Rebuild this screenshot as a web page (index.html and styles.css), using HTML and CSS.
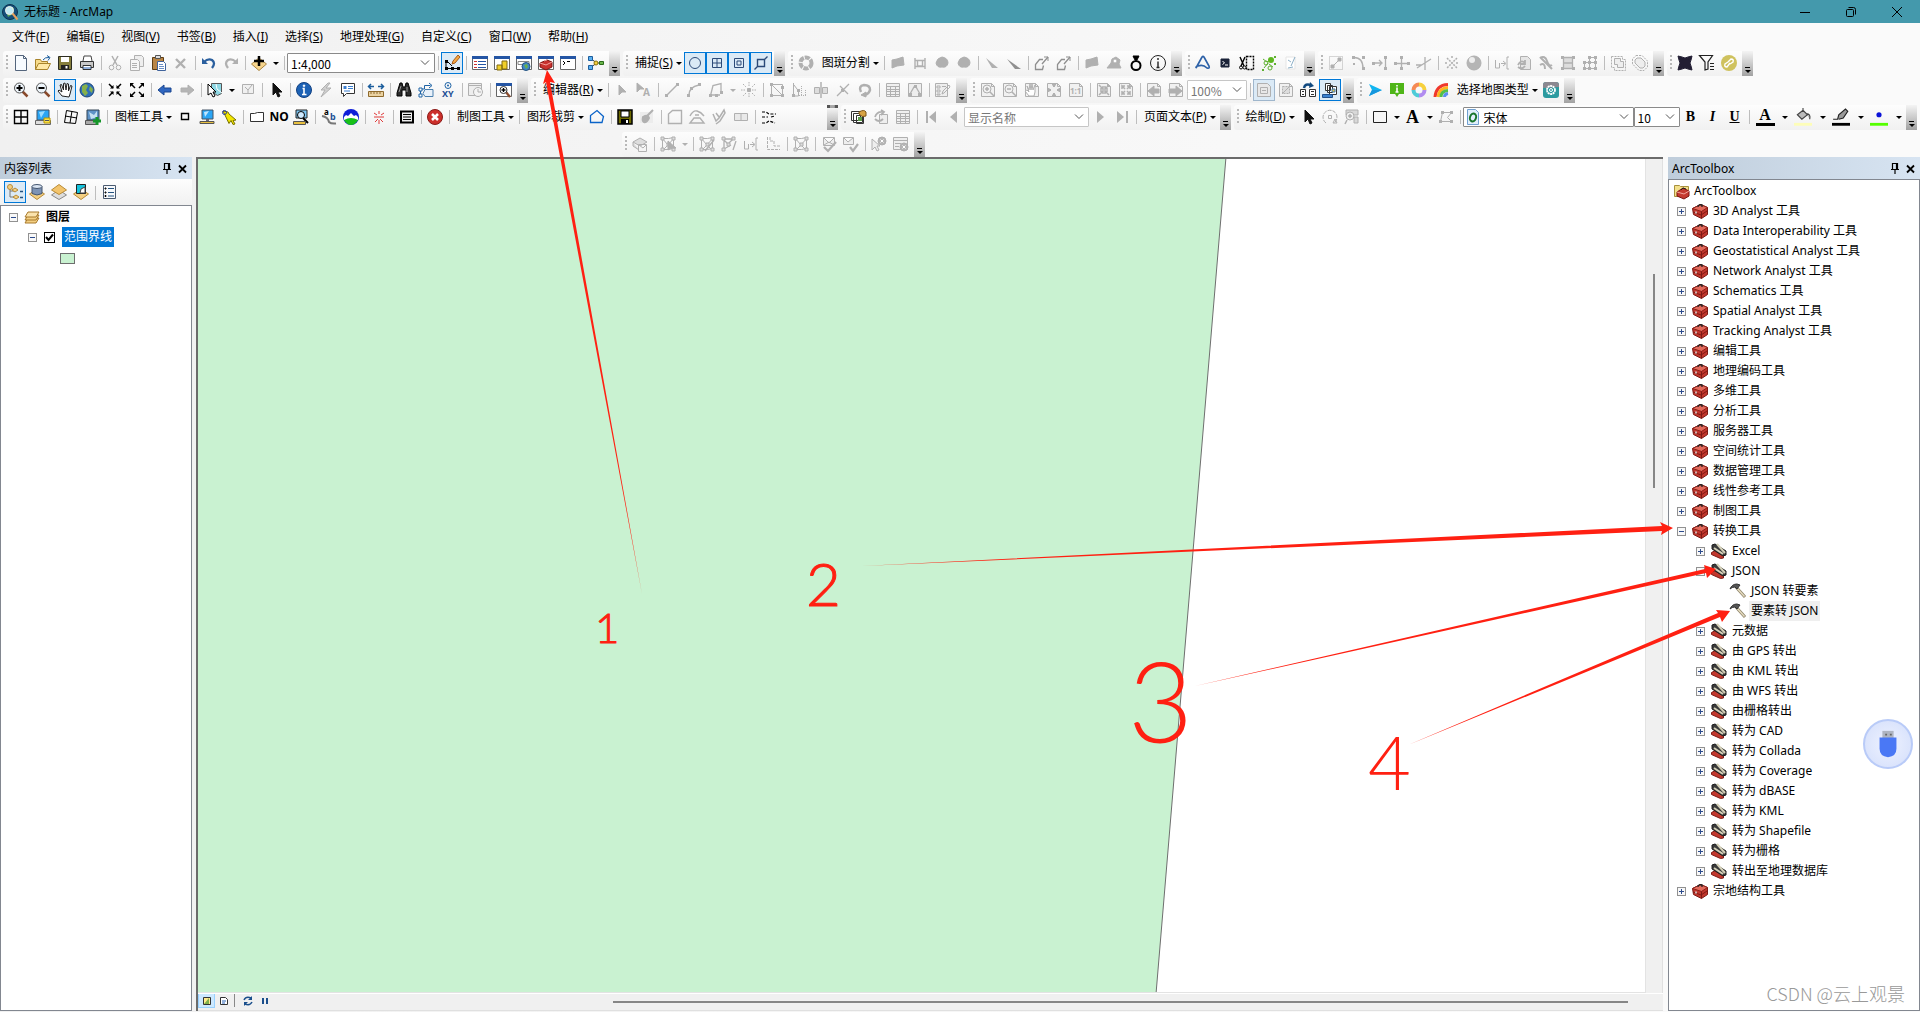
FILE: index.html
```
<!DOCTYPE html>
<html lang="zh-CN">

<head>
    <meta charset="UTF-8">
    <meta name="viewport" content="width=device-width, initial-scale=1.0">
    <title>无标题 - ArcMap</title>
    <link rel="stylesheet" href="styles.css">
</head>

<body>
    <header class="titlebar">
        <span class="app-icon" data-icon="app"></span>
        <span class="app-title">无标题 - ArcMap</span>
        <button class="win-btn" data-icon="minimize"></button>
        <button class="win-btn" data-icon="restore"></button>
        <button class="win-btn" data-icon="closeWin"></button>
    </header>

    <nav class="menubar">
        <button>文件(<u>F</u>)</button>
        <button>编辑(<u>E</u>)</button>
        <button>视图(<u>V</u>)</button>
        <button>书签(<u>B</u>)</button>
        <button>插入(<u>I</u>)</button>
        <button>选择(<u>S</u>)</button>
        <button>地理处理(<u>G</u>)</button>
        <button>自定义(<u>C</u>)</button>
        <button>窗口(<u>W</u>)</button>
        <button>帮助(<u>H</u>)</button>
    </nav>

    <div class="toolbars">
        <div class="toolbar-row">
            <!-- standard -->
            <div class="toolbar">
                <button data-icon="newDoc"></button>
                <button data-icon="open"></button>
                <button data-icon="save"></button>
                <button data-icon="print"></button>
                <span class="sep"></span>
                <button data-icon="cut" disabled></button>
                <button data-icon="copy" disabled></button>
                <button data-icon="paste"></button>
                <button data-icon="remove" disabled></button>
                <span class="sep"></span>
                <button data-icon="undo"></button>
                <button data-icon="redo" disabled></button>
                <span class="sep"></span>
                <button data-icon="addData"></button>
                <button class="drop" aria-label="addData menu"></button>
                <span class="sep"></span>
                <select class="combo scale" aria-label="scale"><option>1:4,000</option></select>
                <span class="sep"></span>
                <button class="active" data-icon="sketch"></button>
                <span class="sep"></span>
                <button data-icon="tocWin"></button>
                <button data-icon="catalogWin"></button>
                <button data-icon="searchWin"></button>
                <button data-icon="toolboxWin"></button>
                <button data-icon="pythonWin"></button>
                <span class="sep"></span>
                <button data-icon="model"></button>
                <button class="more" aria-label="more"></button>
            </div>
            <!-- snapping -->
            <div class="toolbar">
                <button class="text drop">捕捉(<u>S</u>)</button>
                <button class="active" data-icon="snapPoint"></button>
                <button class="active" data-icon="snapEnd"></button>
                <button class="active" data-icon="snapVertex"></button>
                <button class="active" data-icon="snapEdge"></button>
                <button class="more" aria-label="more"></button>
            </div>
            <!-- parcel split -->
            <div class="toolbar">
                <button data-icon="donut" disabled></button>
                <button class="text drop">图斑分割</button>
                <span class="sep"></span>
                <button data-icon="patch" disabled></button>
                <button data-icon="fence" disabled></button>
                <button data-icon="blob" disabled></button>
                <button data-icon="blob" disabled></button>
                <span class="sep"></span>
                <button data-icon="wedge" disabled></button>
                <button data-icon="wedgeDark" disabled></button>
                <span class="sep"></span>
                <button data-icon="polyArrow" disabled></button>
                <button data-icon="polyArrow" disabled></button>
                <span class="sep"></span>
                <button data-icon="patch" disabled></button>
                <button data-icon="hill" disabled></button>
                <button data-icon="ring"></button>
                <button data-icon="infoLine"></button>
                <button class="more" aria-label="more"></button>
            </div>
            <div class="toolbar">
                <button data-icon="loop"></button>
                <button data-icon="console"></button>
                <button data-icon="scissorBox"></button>
                <button data-icon="molecule"></button>
                <button data-icon="sign" disabled></button>
                <button class="more" aria-label="more"></button>
            </div>
            <!-- advanced editing -->
            <div class="toolbar">
                <button data-icon="diagBox" disabled></button>
                <button data-icon="fillet" disabled></button>
                <button data-icon="extendTo" disabled></button>
                <button data-icon="cross" disabled></button>
                <button data-icon="trim" disabled></button>
                <span class="sep"></span>
                <button data-icon="explode" disabled></button>
                <button data-icon="sphere" disabled></button>
                <span class="sep"></span>
                <button data-icon="moveTo" disabled></button>
                <button data-icon="docTurn" disabled></button>
                <button data-icon="smooth" disabled></button>
                <button data-icon="rectNodes" disabled></button>
                <button data-icon="gridNodes" disabled></button>
                <span class="sep"></span>
                <button data-icon="buffer" disabled></button>
                <button data-icon="bufferRound" disabled></button>
                <button class="more" aria-label="more"></button>
            </div>
            <div class="toolbar">
                <button data-icon="puzzle"></button>
                <button data-icon="filter"></button>
                <button data-icon="link"></button>
                <button class="more" aria-label="more"></button>
            </div>
        </div>

        <div class="toolbar-row">
            <!-- tools -->
            <div class="toolbar">
                <button data-icon="zoomIn"></button>
                <button data-icon="zoomOut"></button>
                <button class="active" data-icon="pan"></button>
                <button data-icon="globe"></button>
                <span class="sep"></span>
                <button data-icon="fixedIn"></button>
                <button data-icon="fixedOut"></button>
                <span class="sep"></span>
                <button data-icon="back"></button>
                <button data-icon="forward" disabled></button>
                <span class="sep"></span>
                <button data-icon="selectFeature"></button>
                <button class="drop" aria-label="select menu"></button>
                <button data-icon="clearSelect" disabled></button>
                <span class="sep"></span>
                <button data-icon="pointer"></button>
                <span class="sep"></span>
                <button data-icon="identify"></button>
                <button data-icon="bolt" disabled></button>
                <button data-icon="popup"></button>
                <span class="sep"></span>
                <button data-icon="measure"></button>
                <span class="sep"></span>
                <button data-icon="find"></button>
                <button data-icon="route"></button>
                <button data-icon="gotoXY"></button>
                <span class="sep"></span>
                <button data-icon="time" disabled></button>
                <span class="sep"></span>
                <button data-icon="viewer"></button>
                <button class="more" aria-label="more"></button>
            </div>
            <!-- editor -->
            <div class="toolbar">
                <button class="text drop">编辑器(<u>R</u>)</button>
                <span class="sep"></span>
                <button data-icon="editArrow" disabled></button>
                <button data-icon="editAnno" disabled></button>
                <span class="sep"></span>
                <button data-icon="segment" disabled></button>
                <button data-icon="arc" disabled></button>
                <button data-icon="trace" disabled></button>
                <button class="drop" aria-label="trace menu" disabled></button>
                <button data-icon="burst" disabled></button>
                <span class="sep"></span>
                <button data-icon="vertices" disabled></button>
                <button data-icon="reshape" disabled></button>
                <button data-icon="cutPoly" disabled></button>
                <button data-icon="splitLine" disabled></button>
                <button data-icon="rotate" disabled></button>
                <span class="sep"></span>
                <button data-icon="table" disabled></button>
                <button data-icon="sketchProps" disabled></button>
                <span class="sep"></span>
                <button data-icon="createFeat" disabled></button>
                <button class="more" aria-label="more"></button>
            </div>
            <!-- layout -->
            <div class="toolbar">
                <button data-icon="pageIn" disabled></button>
                <button data-icon="pageOut" disabled></button>
                <button data-icon="pagePan" disabled></button>
                <button data-icon="pageFull" disabled></button>
                <button data-icon="pageOne" disabled></button>
                <span class="sep"></span>
                <button data-icon="pageFixIn" disabled></button>
                <button data-icon="pageFixOut" disabled></button>
                <span class="sep"></span>
                <button data-icon="pageBack" disabled></button>
                <button data-icon="pageNext" disabled></button>
                <select class="combo percent" aria-label="zoom" disabled><option>100%</option></select>
                <span class="sep"></span>
                <button class="active dim" data-icon="draft" disabled></button>
                <button data-icon="focusFrame" disabled></button>
                <button data-icon="changeLayout"></button>
                <button class="active" data-icon="dataDriven"></button>
                <button class="more" aria-label="more"></button>
            </div>
            <div class="toolbar">
                <button data-icon="send"></button>
                <button data-icon="infoTip"></button>
                <button data-icon="colorWheel"></button>
                <button data-icon="rainbow"></button>
                <button class="text drop">选择地图类型</button>
                <button data-icon="gear"></button>
                <button class="more" aria-label="more"></button>
            </div>
        </div>

        <div class="toolbar-row">
            <!-- frame tools -->
            <div class="toolbar">
                <button data-icon="grid"></button>
                <button data-icon="pcNote"></button>
                <span class="sep"></span>
                <button data-icon="gridSkew"></button>
                <button data-icon="pcAdd"></button>
                <span class="sep"></span>
                <button class="text drop">图框工具</button>
                <button data-icon="square"></button>
                <button data-icon="pc"></button>
                <button data-icon="yellowArrow"></button>
                <span class="sep"></span>
                <button data-icon="sheet"></button>
                <button class="no-btn">NO</button>
                <button data-icon="pcSearch"></button>
                <span class="sep"></span>
                <button data-icon="abCurve"></button>
                <button data-icon="forest"></button>
                <span class="sep"></span>
                <button data-icon="redStar"></button>
                <span class="sep"></span>
                <button data-icon="book"></button>
                <span class="sep"></span>
                <button data-icon="stop"></button>
                <span class="sep"></span>
                <button class="text drop">制图工具</button>
                <span class="sep"></span>
                <button class="text drop">图形裁剪</button>
                <button data-icon="pentagon"></button>
                <span class="sep"></span>
                <button data-icon="floppy"></button>
                <button data-icon="brush" disabled></button>
                <span class="sep"></span>
                <button data-icon="chamfer" disabled></button>
                <button data-icon="dome" disabled></button>
                <button data-icon="quill" disabled></button>
                <button data-icon="panes" disabled></button>
                <span class="sep"></span>
                <button data-icon="dashes"></button>
                <span class="toolbar-space"></span>
                <button class="more wide" aria-label="more"></button>
            </div>
            <!-- data driven pages -->
            <div class="toolbar">
                <button data-icon="pagesSetup"></button>
                <button data-icon="pagesRefresh" disabled></button>
                <button data-icon="table" disabled></button>
                <span class="sep"></span>
                <button data-icon="first" disabled></button>
                <button data-icon="prev" disabled></button>
                <select class="combo page-name" aria-label="page" disabled><option>显示名称</option></select>
                <button data-icon="next" disabled></button>
                <button data-icon="last" disabled></button>
                <span class="sep"></span>
                <button class="text drop">页面文本(<u>P</u>)</button>
                <button class="more" aria-label="more"></button>
            </div>
            <!-- draw -->
            <div class="toolbar">
                <button class="text drop">绘制(<u>D</u>)</button>
                <button data-icon="pointer"></button>
                <button data-icon="rotateGraphic" disabled></button>
                <button data-icon="zoomSelected" disabled></button>
                <span class="sep"></span>
                <button data-icon="rectShape"></button>
                <button class="drop" aria-label="shape menu"></button>
                <button class="serif big">A</button>
                <button class="drop" aria-label="text menu"></button>
                <button data-icon="editVertices" disabled></button>
                <span class="sep"></span>
                <span class="font-box">
                    <span data-icon="openType"></span>
                    <select class="combo font" aria-label="font"><option>宋体</option></select>
                </span>
                <select class="combo size" aria-label="font size"><option>10</option></select>
                <button class="serif">B</button>
                <button class="serif italic">I</button>
                <button class="serif"><u>U</u></button>
                <span class="sep"></span>
                <button class="color letter" aria-label="font color">A</button>
                <button class="drop" aria-label="font color menu"></button>
                <button class="color" data-icon="fillColor"></button>
                <button class="drop" aria-label="fill color menu"></button>
                <button class="color" data-icon="lineColor"></button>
                <button class="drop" aria-label="line color menu"></button>
                <button class="color" data-icon="markerColor"></button>
                <button class="drop" aria-label="marker color menu"></button>
                <button class="more" aria-label="more"></button>
            </div>
        </div>

        <div class="toolbar-row topology-row">
            <!-- topology -->
            <div class="toolbar">
                <button data-icon="topoSelect" disabled></button>
                <span class="sep"></span>
                <button data-icon="topoEdit" disabled></button>
                <button class="drop" aria-label="topology menu" disabled></button>
                <span class="sep"></span>
                <button data-icon="topoModify" disabled></button>
                <button data-icon="topoReshape" disabled></button>
                <button data-icon="moveTo" disabled></button>
                <button data-icon="generalize" disabled></button>
                <span class="sep"></span>
                <button data-icon="planarize" disabled></button>
                <span class="sep"></span>
                <button data-icon="validate" disabled></button>
                <button data-icon="validateAll" disabled></button>
                <span class="sep"></span>
                <button data-icon="fixError" disabled></button>
                <button data-icon="errorWin" disabled></button>
                <button class="more" aria-label="more"></button>
            </div>
        </div>
    </div>

    <main class="workspace">
        <aside class="panel toc">
            <div class="panel-title">
                <span>内容列表</span>
                <button data-icon="pin"></button>
                <button data-icon="close"></button>
            </div>
            <div class="toc-tools">
                <button class="active" data-icon="byOrder"></button>
                <button data-icon="bySource"></button>
                <button data-icon="byVisible"></button>
                <button data-icon="bySelection"></button>
                <span class="sep"></span>
                <button data-icon="options"></button>
            </div>
            <ul class="panel-body toc-list">
                <li class="toc-frame"><button class="expander open" aria-label="collapse"></button><span data-icon="layers"></span><b>图层</b></li>
                <li class="toc-layer"><button class="expander open" aria-label="collapse"></button><input type="checkbox" id="layer1" checked><label for="layer1">范围界线</label></li>
                <li class="toc-symbol"><span class="swatch"></span></li>
            </ul>
        </aside>

        <section class="map-view">
            <svg class="map" viewBox="0 0 1447 833" preserveAspectRatio="none">
                <path class="map-area" d="M-2 -2H1028L958 835H-2z"/>
            </svg>
            <div class="scroll-v"><span></span></div>
            <div class="map-status">
                <button class="current" data-icon="dataView"></button>
                <button data-icon="layoutView"></button>
                <span class="status-sep"></span>
                <button data-icon="refresh"></button>
                <button data-icon="pause"></button>
                <div class="scroll-h"><span></span></div>
            </div>
        </section>

        <aside class="panel toolbox">
            <div class="panel-title">
                <span>ArcToolbox</span>
                <button data-icon="pin"></button>
                <button data-icon="close"></button>
            </div>
            <ul class="panel-body tree" id="toolTree"></ul>
        </aside>
    </main>

    <!-- pen marks drawn over the whole window -->
    <svg class="marks" viewBox="0 0 1920 1012" preserveAspectRatio="none">
        <path d="M642 594L550 82L555 83L547 70L543 84L546 82z"/>
        <path d="M862 566L1662 531L1661 535L1673 528L1660 522L1662 526z"/>
        <path d="M1195 686L1706 573L1707 578L1716 569L1704 565L1705 569z"/>
        <path d="M1408 745L1720 617L1722 622L1730 611L1716 610L1718 613z"/>
        <text class="mark-1" x="595" y="643">1</text>
        <text class="mark-2" x="806" y="606">2</text>
        <text class="mark-3" x="1128" y="743">3</text>
        <text class="mark-4" x="1368" y="790">4</text>
    </svg>

    <button class="usb-ball" data-icon="usb"></button>
    <span class="watermark">CSDN @云上观景</span>

    <script src="app.js"></script>
</body>

</html>
```

FILE: styles.css
```
* {
    box-sizing: border-box;
}

body {
    display: flex;
    flex-direction: column;
    height: 100vh;
    margin: 0;
    overflow: hidden;
    background: linear-gradient(to right, #f0f0f0, #fafafa 80%);
    color: #000;
    font-family: "Noto Sans", "Noto Sans CJK SC", sans-serif;
    font-size: 12px;
    line-height: 20px;
}

button {
    display: flex;
    flex: none;
    align-items: center;
    justify-content: center;
    padding: 0;
    border: 0;
    background: none;
    color: #000;
    font: inherit;
    white-space: nowrap;
}

button:disabled {
    color: #b0b0b0;
}

svg {
    display: block;
}

.ico {
    width: 16px;
    height: 16px;
    fill: none;
    stroke: currentColor;
    flex: none;
    overflow: visible;
}

.ico text {
    fill: currentColor;
    stroke: none;
    font-weight: bold;
}

/* title bar and menu */
.titlebar {
    display: flex;
    align-items: center;
    height: 23px;
    padding-left: 2px;
    background: #4499ac;
}

.app-title {
    flex: 1;
    padding-left: 6px;
}

.win-btn {
    width: 46px;
    height: 20px;
}

.menubar {
    display: flex;
    height: 28px;
    padding-left: 4px;
}

.menubar button {
    padding: 0 9px 0 8px;
}

/* toolbars */
.toolbars {
    display: flex;
    flex-direction: column;
    gap: 2px;
}

.toolbar-row {
    display: flex;
    gap: 3px;
    height: 25px;
    padding-left: 3px;
}

.topology-row {
    padding-left: 622px;
}

.toolbar {
    display: flex;
    flex: none;
    align-items: flex-start;
    background: linear-gradient(to bottom, #fdfdfd, #f1f1f1);
    border-radius: 3px 0 0 3px;
}

.toolbar::before {
    content: "";
    width: 2px;
    height: 16px;
    margin: 4px 2px 0 3px;
    background: repeating-linear-gradient(to bottom, #b8b8b8 0 2px, transparent 2px 4px);
}

.toolbar button,
.toc-tools button {
    width: 22px;
    height: 22px;
    margin-top: 1px;
}

.toolbar .active,
.toc-tools .active {
    border: 1px solid #0078d7;
    background: #dbeaf6;
}

.toolbar .dim {
    border-color: #9fb6cc;
}

.sep {
    flex: none;
    width: 1px;
    height: 14px;
    margin: 5px 2px 0 3px;
    background: #bdbdbd;
}

.toolbar .drop {
    width: auto;
    min-width: 11px;
}

.drop::after {
    content: "";
    margin: 0 2px 0 3px;
    border: 3px solid transparent;
    border-top-color: currentColor;
    border-bottom: 0;
}

.toolbar .text {
    padding-left: 5px;
}

.toolbar .more {
    position: relative;
    width: 11px;
    height: 25px;
    margin: 0 0 0 2px;
    background: linear-gradient(to bottom, #f4f4f4, #a2a2a2);
}

.more::before {
    content: "";
    position: absolute;
    left: 3px;
    bottom: 8px;
    width: 5px;
    height: 1px;
    background: #000;
}

.more::after {
    content: "";
    position: absolute;
    left: 3px;
    bottom: 3px;
    border: 3px solid transparent;
    border-top-color: #000;
    border-bottom: 0;
}

.wide {
    border-top: 3px dotted #555;
}

.toolbar-space {
    width: 45px;
}

.combo {
    flex: none;
    height: 20px;
    margin: 2px 0 0;
    padding: 0 16px 0 3px;
    appearance: none;
    border: 1px solid #8a8a8a;
    border-radius: 1px;
    background: #fff url("data:image/svg+xml,%3Csvg xmlns='http://www.w3.org/2000/svg' width='10' height='6'%3E%3Cpath d='M1 .5l4 4 4-4' fill='none' stroke='%23555'/%3E%3C/svg%3E") no-repeat right 4px center;
    color: #000;
    font: 12px "Noto Sans CJK SC", sans-serif;
}

.combo:disabled {
    border-color: #c6c6c6;
    color: #777;
    opacity: 1;
}

.scale { width: 148px; }
.percent { width: 60px; }
.page-name { width: 125px; }
.font { width: 171px; padding-left: 20px; }
.size { width: 46px; }

.font-box {
    display: grid;
}

.font-box > * {
    grid-area: 1 / 1;
}

.font-box span {
    z-index: 1;
    padding: 4px 0 0 2px;
}

.no-btn {
    font-weight: bold;
}

.toolbar .serif {
    font: bold 14px "Liberation Serif", serif;
}

.toolbar .big {
    font-size: 18px;
}

.toolbar .italic {
    font-style: italic;
}

.toolbar .color {
    width: 27px;
}

.color .ico {
    width: 18px;
    height: 18px;
}

.toolbar .letter {
    width: 19px;
    height: 20px;
    margin: 1px 4px 0 4px;
    border-bottom: 3px solid #000;
    font: bold 16px "Liberation Serif", serif;
}

/* docked panels */
.workspace {
    display: flex;
    flex: 1;
    min-height: 0;
    padding-bottom: 1px;
}

.panel {
    display: flex;
    flex: none;
    flex-direction: column;
}

.toc { width: 192px; }
.toolbox { width: 252px; }

.panel-title {
    display: flex;
    align-items: center;
    height: 22px;
    padding: 1px 1px 0 4px;
    background: linear-gradient(to right, #bfcddb, #d7e4f2);
}

.panel-title span {
    flex: 1;
}

.panel-title button {
    width: 16px;
    height: 16px;
}

.panel-body {
    flex: 1;
    margin: 0;
    padding: 1px 0;
    overflow: hidden;
    border: 1px solid #828790;
    background: #fff;
    list-style: none;
}

.panel-body li {
    display: flex;
    align-items: center;
    height: 20px;
}

.toc-tools {
    display: flex;
    height: 26px;
    padding: 1px 0 0 4px;
    background: linear-gradient(to bottom, #fdfdfd, #f1f1f1);
}

.toc-tools .sep {
    margin-top: 6px;
}

.toc-frame {
    gap: 6px;
    padding-left: 8px;
}

.toc-layer {
    gap: 7px;
    padding-left: 27px;
}

.toc-layer input {
    appearance: none;
    width: 11px;
    height: 11px;
    margin: 0;
    border: 1px solid #000;
    background: #fff url("data:image/svg+xml,%3Csvg xmlns='http://www.w3.org/2000/svg' width='9' height='9'%3E%3Cpath d='M1 4l2.5 3L8 1.500' fill='none' stroke='%23000' stroke-width='2'/%3E%3C/svg%3E") center no-repeat;
}

.toc-layer label {
    padding: 0 2px;
    background: #0078d7;
    color: #fff;
}

.toc-symbol {
    padding-left: 59px;
}

.toc-list .toc-symbol {
    height: 22px;
}

.swatch {
    width: 15px;
    height: 11px;
    border: 1px solid #6e6e6e;
    background: #c9f2d1;
}

.expander {
    position: relative;
    width: 9px;
    height: 9px;
    border: 1px solid #919191;
    background: #f8f8f8;
}

.expander::before,
.expander:not(.open)::after {
    content: "";
    position: absolute;
    left: 1px;
    top: 3px;
    width: 5px;
    height: 1px;
    background: #2b4a8c;
}

.expander:not(.open)::after {
    left: 3px;
    top: 1px;
    width: 1px;
    height: 5px;
}

.tree span.label {
    padding: 0 2px;
}

.tree .ico {
    margin: 0 3px 0 6px;
}

.tree .root .ico {
    margin-left: 5px;
    margin-right: 2px;
}

.tree .level-1 { padding-left: 8px; }
.tree .level-2 { padding-left: 27px; }
.tree .level-3 { padding-left: 55px; }

.tree .hot .label {
    background: #efefef;
}

/* map */
.map-view {
    display: grid;
    flex: 1;
    grid-template: minmax(0, 1fr) 18px / minmax(0, 1fr) 17px;
    margin: 0 5px 0 4px;
    border: solid #6b6b6b;
    border-width: 2px 0 0 2px;
    background: #f0f0f0;
}

.map {
    width: 100%;
    height: 100%;
    border: solid #e3e3e3;
    border-width: 0 1px 1px 0;
    background: #fff;
}

.map-area {
    fill: #c9f2d1;
    stroke: #6e6e6e;
}

.scroll-v {
    display: grid;
    grid-template-rows: 115fr 214fr 504fr;
    justify-content: center;
    border-right: 1px solid #e0e0e0;
}

.scroll-v span {
    grid-row: 2;
    width: 2px;
    background: #868686;
}

.map-status {
    display: flex;
    grid-column: 1 / 3;
    border-top: 1px solid #fff;
    border-bottom: 1px solid #e0e0e0;
}

.map-status button {
    width: 17px;
    height: 14px;
}

.map-status .current {
    border: 1px solid #99d1ff;
    border-top: 0;
    background: #cce8ff;
}

.status-sep {
    width: 1px;
    height: 13px;
    margin: 0 4px 0 2px;
    background: #888;
}

.scroll-h {
    display: grid;
    flex: 1;
    grid-template-columns: 340fr 1016fr 35fr;
    align-items: center;
}

.scroll-h span {
    grid-column: 2;
    height: 2px;
    background: #868686;
}

/* things floating over the window */
.marks {
    position: absolute;
    inset: 0;
    width: 100%;
    height: 100%;
    pointer-events: none;
    fill: #ff2012;
    font-family: Lato, sans-serif;
    font-weight: 300;
}

.mark-1,
.mark-2 {
    stroke: #ff2012;
}

.mark-1 { font-size: 42px; }
.mark-2 { font-size: 60px; }
.mark-3 { font-size: 112px; }
.mark-4 { font-size: 74px; }

.usb-ball {
    position: absolute;
    right: 7px;
    top: 719px;
    width: 50px;
    height: 50px;
    border: 2px solid #b9cbf8;
    border-radius: 50%;
    background: radial-gradient(#eef2ff, #d3defb);
}

.usb-ball .ico {
    width: 30px;
    height: 30px;
}

.watermark {
    position: absolute;
    right: 15px;
    bottom: 6px;
    color: #999;
    font: 18px/26px "Noto Sans CJK SC", sans-serif;
    font-weight: 300;
}
```

FILE: app.js
```
// shared pieces of the icons
var win = '<path d="M.5 2.500h15v12H.5z" fill="#fff" stroke="#666"/><path d="M0 1h16v3H0z" fill="#2455a4" stroke="none"/>';
var page = '<path d="M1.500 1.500h10l3 3v10h-13z" fill="#f1f1f1"/><path d="M11.500 1.500v3h3"/>';
var pc = '<path d="M3 1h11v9H3z" fill="#2aa5f5" stroke="#456"/><path d="M5 3l5-1-4 6z" fill="#bfe6ff" stroke="none"/><path d="M7 10h3v2H7z" fill="#667" stroke="none"/><path d="M1 12.500h14v2H1z" fill="#e8c040" stroke="#555"/>';
var diamond = '<path d="M8 5l7.500 5L8 15.500.500 10z" fill="#f3cf82" stroke="#b98b35"/>';
var nodes = '<path d="M2.500 2.500h6l5-1v11l-5 1h-6zM2 2l6 7 6-7M8 9l-5 5M8 9l5 5"/><path d="M1 1h3v3H1zM12 1h3v3h-3zM1 12h3v3H1zM12 12h3v3h-3zM7 7h3v3H7z" fill="#ddd"/>';
var lens = '<path d="M9.500 9.500l5 5" stroke="#8a4a2c" stroke-width="2.500"/><circle cx="6.500" cy="6" r="5" fill="#eef5fb" stroke="#555"/>';

var icons = {
    app: '<circle cx="8" cy="8" r="7.500" fill="#164f7a" stroke="#0c3350"/><path d="M3 5l4-3 5 2-1 6-5 3z" fill="#5aa35a" stroke="none"/><circle cx="7.500" cy="6.500" r="4" fill="#bfe9f2" stroke="#eee"/><path d="M10.500 9.500l5 6" stroke="#e9a05c" stroke-width="2"/>',
    minimize: '<path d="M3 8.500h10"/>',
    restore: '<rect x="3.500" y="5.500" width="7" height="7" rx="1"/><path d="M5.500 3.500h5q2 0 2 2v5"/>',
    closeWin: '<path d="M3 3l10 10M13 3L3 13"/>',
    newDoc: '<path d="M2.500 .5h8l3 3v12h-11z" fill="#f7fbff" stroke="#54657c"/><path d="M10.500 .5v3h3" stroke="#54657c"/>',
    open: '<path d="M.5 14.500v-10h5l1 2h6v3" fill="#f7dc8c" stroke="#a8842c"/><path d="M.5 14.500l3-6h12l-3 6z" fill="#ffe9a6" stroke="#a8842c"/><path d="M8 5q2-3 6-2.500M12 .5l3 2-2 3" stroke="#1a5c9c"/>',
    save: '<path d="M1.500 1.500h13v13h-13z" fill="#857d3c" stroke="#2c2c20"/><path d="M4 2h8v5H4z" fill="#fff" stroke="none"/><path d="M4 10h8v4.500H4z" fill="#222" stroke="none"/><path d="M9.500 11v2.500" stroke="#fff" stroke-width="2"/>',
    print: '<path d="M4 6l1-5h7l1 5" fill="#fff" stroke="#444"/><path d="M1.500 6.500h13v6h-13z" fill="#c9c9c9" stroke="#333"/><path d="M4 10.500h8v4H4z" fill="#fff" stroke="#333"/><path d="M4 13h8" stroke="#2b64b8"/>',
    cut: '<path d="M5 1l5 9M11 1L6 10" stroke-width="1.500"/><circle cx="4.500" cy="12.500" r="2.300"/><circle cx="11.500" cy="12.500" r="2.300"/>',
    copy: '<path d="M5.500 .5h7l2 2v9h-9z" fill="#eee"/><path d="M1.500 4.500h7l2 2v9h-9z" fill="#f6f6f6"/><path d="M3 8.500h5M3 10.500h5M3 12.500h5"/>',
    paste: '<path d="M1.500 2.500h11v12h-11z" fill="#b98545" stroke="#5e3e14"/><path d="M4.500 .5h5v3h-5z" fill="#ddd" stroke="#555"/><path d="M6.500 6.500h6l2 2v7h-8z" fill="#fff" stroke="#40639c"/><path d="M8 9.500h4M8 11.500h5M8 13.500h5" stroke="#6a8fc6"/>',
    remove: '<path d="M3 4l9 9M12 4l-9 9" stroke-width="2.400"/>',
    undo: '<path d="M3 7q4-4 8-2 4 3 0 8" stroke="#2a5f9e" stroke-width="2.300"/><path d="M1 3v6h6z" fill="#2a5f9e" stroke="none"/>',
    redo: '<path d="M13 7q-4-4-8-2-4 3 0 8" stroke-width="2.300"/><path d="M15 3v6H9z" fill="currentColor" stroke="none"/>',
    addData: '<path d="M8 3l7.500 6L8 15.500.500 9z" fill="#f6d48c" stroke="#a98440"/><path d="M8 1v10M3 6h10" stroke="#000" stroke-width="2.500"/>',
    sketch: '<path d="M2 6v7M3 13.500h10M3 6l5 5" stroke="#000"/><path d="M1 5h3v3H1zM1 12h3v3H1zM7 12h3v3H7zM13 12h3v3h-3z" fill="#000" stroke="none"/><path d="M8 9l1-3 5-6 2 2-5 6z" fill="#f5a742" stroke="#a65c1e"/>',
    tocWin: win + '<path d="M2 6.500h3M2 9.500h3M2 12.500h3" stroke="#c33"/><path d="M6 6.500h8M6 9.500h8M6 12.500h8" stroke="#2455a4"/>',
    catalogWin: win + '<path d="M8 6h5v8H8zM3 10h5v5H3z" fill="#f0cf2a" stroke="#806a10"/>',
    searchWin: win + '<path d="M2 6.500h11v3H2z" stroke="#888"/><circle cx="10" cy="11.500" r="4" fill="#3f86c8" stroke="#24527e"/><path d="M8 10l3-1 1 3-2 2z" fill="#68b04c" stroke="none"/>',
    toolboxWin: win + '<path d="M2 8l7-3 5 2v5l-6 3-6-3z" fill="#c9302c" stroke="#7e1512"/><path d="M2 8l6 2 6-3M6 6l3-1" stroke="#f2a29c"/>',
    pythonWin: win + '<path d="M3 6l2 2-2 2M7 6.500h3" stroke="#000"/>',
    model: '<path d="M3 4l6 4M3 12l6-4h3" stroke="#333"/><path d="M.5 1.500h4v4h-4zM.5 10.500h4v4h-4z" fill="#5ab0f0" stroke="#1d5d9c"/><circle cx="8" cy="8" r="2" fill="#f4d03c" stroke="#8c7310"/><path d="M11.500 6.500h4v3h-4z" fill="#69b64a" stroke="#2b6a1a"/>',
    snapPoint: '<circle cx="8" cy="8" r="5.500" stroke="#2c4a78"/>',
    snapEnd: '<path d="M3.500 3.500h9v9h-9zM8 3v10M3 8h10" stroke="#2c4a78"/>',
    snapVertex: '<path d="M3.500 3.500h9v9h-9zM6 6h4v4H6z" stroke="#2c4a78"/>',
    snapEdge: '<path d="M4.500 4.500h7v7h-7zM1.500 14.500l3-3M11.500 4.500l3-3" stroke="#2c4a78" stroke-width="1.400"/>',
    donut: '<circle cx="8" cy="8" r="5.500" stroke-width="4" stroke-dasharray="5 1"/>',
    patch: '<path d="M2 5l5-1 6-2 1 8-7 1-5 2z" fill="currentColor"/>',
    fence: '<path d="M3 3v11M13 3v11M3 5.500h10M3 11.500h10M5.500 6v5h5V6" stroke-width="1.400"/>',
    blob: '<path d="M2 8q1-5 6-6 6 1 6 6-1 5-6 4-5 1-6-4z" fill="currentColor"/>',
    wedge: '<path d="M2 3l12 10H8z" fill="currentColor" stroke="none"/>',
    wedgeDark: '<path d="M1 4l14 10H9z" fill="#8f8f8f" stroke="none"/>',
    polyArrow: '<path d="M9 4.500H5.500l-4 5v5h7l1-4M8 9l6-7" stroke="#8f8f8f" stroke-width="1.300"/><path d="M10 2h4v4" stroke="#8f8f8f"/>',
    hill: '<path d="M1 13l4-5 1-4 4-2 4 3-1 4 2 4z" fill="currentColor"/><circle cx="9" cy="6" r="2" fill="#fff"/>',
    ring: '<circle cx="8" cy="10.500" r="4.500" stroke="#000" stroke-width="2"/><path d="M5 1h6l-2 4H7z" fill="#000"/>',
    infoLine: '<circle cx="8" cy="8" r="7.500" stroke="#222"/><path d="M8 6.500v6M6.500 12.500h3M8 3v2" stroke="#222" stroke-width="1.400"/>',
    loop: '<path d="M1 13L7 2q1-1 2 0l5 9q1 3-2 2-4-4-9-2-2 0-2 2z" stroke="#2e62a8" stroke-width="1.700"/>',
    console: '<path d="M4 4h8v8H4z" fill="#1a2238" stroke="#1a2238"/><path d="M5.500 6l2 2-2 1.500M8 10h3" stroke="#fff"/>',
    scissorBox: '<path d="M7.500 1.500h7v13h-7z" stroke="#000" stroke-width="1.400" stroke-dasharray="2 1"/><path d="M1 2l4 9M6 2L2 11" stroke="#000" stroke-width="1.400"/><circle cx="2" cy="12.500" r="1.500" stroke="#000"/><circle cx="5.500" cy="12.500" r="1.500" stroke="#000"/>',
    molecule: '<path d="M2 4l4 3 4-2M8 9l4 3M7 8l-4 5" stroke="#5eb030"/><circle cx="10" cy="5" r="3" fill="#5eb820" stroke="none"/><circle cx="5" cy="8" r="2" stroke="#5eb030"/><circle cx="9" cy="13" r="2" stroke="#5eb030"/><path d="M1 15h2M13 2h2M13 9h2" stroke="#5eb030" stroke-width="2"/>',
    sign: '<path d="M3 2h9v12H3z" fill="#fff" stroke="#e5e5e5"/><path d="M5 5l3 2M12 2l-4 9M5 13l5-1" stroke="#8db0c8"/>',
    diagBox: '<path d="M1.500 1.500h13v13h-13z" stroke-dasharray="1 1"/><path d="M5 11l6-6"/><path d="M3 10h3v3H3zM10 3h3v3h-3z" fill="currentColor"/>',
    fillet: '<path d="M4 2.500q9 0 9 11" stroke-width="1.400"/><path d="M2 1h3v3H2zM12 1h3v3h-3zM12 12h3v3h-3zM3 8h2v2H3z" fill="currentColor" stroke="none"/>',
    extendTo: '<path d="M2 8h7M7 5l3 3-3 3M13.500 2v12" stroke-width="1.300"/><path d="M0 7h3v3H0zM12 1h3v3h-3zM12 12h3v3h-3z" fill="currentColor" stroke="none"/>',
    cross: '<path d="M1 8.500h14M7.500 2v12" stroke-width="1.300"/><path d="M6 1h3v3H6zM6 12h3v3H6zM0 7h3v3H0zM13 7h3v3h-3z" fill="currentColor" stroke="none"/>',
    trim: '<path d="M1 13L15 4M9 2v13M0 10h6" stroke-width="1.300"/>',
    explode: '<path d="M3 3l10 10M13 3L3 13M8 1v3M8 12v3M1 8h3M12 8h3" stroke-width="1.500" stroke-dasharray="2 1"/>',
    sphere: '<circle cx="8" cy="8" r="7" fill="#b5b5b5"/><circle cx="6" cy="5" r="3" fill="#eee" stroke="none"/>',
    moveTo: '<path d="M1.500 5v8h4V8M7 8.500h4M9 6l3 2.500L9 11M15 2h-2v12h2"/>',
    docTurn: '<path d="M4.500 1.500h7l3 3v10h-10z" fill="#e6e6e6"/><path d="M2 10q3-6 7-2M9 5v4H5M9 11q-3 4-7 1" stroke-width="1.800"/>',
    smooth: '<path d="M2 3q5-3 7 3t5 4M2 10q5-3 5 4M2 2l12 12" stroke-width="2"/>',
    rectNodes: '<path d="M3.500 2.500h9v11h-9zM3 8h10" fill="#ddd" stroke-width="1.300"/><path d="M1 1h3v3H1zM12 1h3v3h-3zM1 12h3v3H1zM12 12h3v3h-3z" fill="currentColor" stroke="none"/>',
    gridNodes: '<path d="M2.500 7.500h11v6h-11zM7.500 13V2.500h6v5"/><path d="M6 1h3v3H6zM12 1h3v3h-3zM1 6h3v3H1zM6 6h3v3H6zM12 6h3v3h-3zM1 12h3v3H1zM6 12h3v3H6zM12 12h3v3h-3z" fill="currentColor" stroke="none"/>',
    buffer: '<path d="M4.500 3.500h6v3h3v6h-6v-3h-3z" fill="#eee"/><path d="M1.500 1.500h11v3h3v11h-11v-3h-3z" stroke-dasharray="2 1"/>',
    bufferRound: '<path d="M5 3h4l4 4v4l-2 2H8L3 8V5z" fill="#eee"/><path d="M4 .5h6L15.500 6v6L12 15.500H7L.5 9V4z" stroke-dasharray="2 1"/>',
    puzzle: '<path d="M1 1l4 1q3 2 6 0l4-1-1 4q-2 3 0 6l1 4-4-1q-3-2-6 0l-4 1 1-4q2-3 0-6z" fill="#221e33" stroke="#221e33"/>',
    filter: '<path d="M.5 .5h13L9 7v7l-3 1V7zM11 8.500h4M11 11.500h4M11 14.500h4" stroke="#222" stroke-width="1.200"/>',
    link: '<circle cx="8" cy="8" r="8" fill="#cfc25e" stroke="none"/><path d="M7 7l3-3q3 0 2 3L9 9M9 8l-3 4q-3 0-2-3l3-2" stroke="#fff" stroke-width="1.400"/>',
    zoomIn: lens + '<path d="M6.500 3v6M3.500 6h6" stroke="#000" stroke-width="2"/>',
    zoomOut: lens + '<path d="M3.500 6h6" stroke="#000" stroke-width="2"/>',
    pan: '<path d="M5 14L1 9l1-1 3 2-2-7 1.500-.5L6.500 8V1.500L8 1l1 7 1-6.500 1.500.5v7l2-5.500 1.500.5-2 8-1 3z" fill="#fff" stroke="#222"/>',
    globe: '<circle cx="8" cy="8" r="7" fill="#2f6fb8" stroke="#1d4576"/><path d="M3 4l4-2 2 2-2 4 2 3-3 3-3-4zM11 4l3 3-1 4-3-3z" fill="#86b04a" stroke="none"/>',
    fixedIn: '<path d="M2 2l4 4M14 2l-4 4M2 14l4-4M14 14l-4-4" stroke="#000" stroke-width="1.500"/><path d="M6.500 3v3.500H3zM9.500 3v3.500H13zM6.500 13V9.500H3zM9.500 13V9.500H13z" fill="#000" stroke="none"/>',
    fixedOut: '<path d="M2 2l4 4M14 2l-4 4M2 14l4-4M14 14l-4-4" stroke="#000" stroke-width="1.500"/><path d="M1 1h4L1 5zM15 1h-4l4 4zM1 15h4l-4-4zM15 15h-4l4-4z" fill="#000" stroke="none"/>',
    back: '<path d="M1 8l6-5v3h7v4H7v3z" fill="#2f66c0" stroke="#1b4690"/>',
    forward: '<path d="M15 8L9 3v3H2v4h7v3z" fill="#b5b5b5"/>',
    selectFeature: '<path d="M4.500 1.500h10v10l-4 2-6-4z" fill="#8fd8e4" stroke="#555"/><path d="M9 2l1 5 5 4" stroke="#fff"/><path d="M1 2v11l3-2 2 4 2-1-2-4h3z" fill="#fff" stroke="#000"/>',
    clearSelect: '<path d="M2.500 2.500h11v9h-11z" fill="#f0f0f0"/><path d="M5 5l3 3 4-5M8 8v3"/>',
    pointer: '<path d="M5 1v12l3-3 2 5 2-1-2-4h4z" fill="#111" stroke="#111"/>',
    identify: '<circle cx="8" cy="8" r="7.500" fill="#1d62b5" stroke="#124182"/><path d="M6.500 6.500H8v6M6 12.500h4.500" stroke="#fff" stroke-width="1.600"/><circle cx="8" cy="3.800" r="1" fill="#fff" stroke="#fff" stroke-width=".5"/>',
    bolt: '<path d="M10 1L3 8h4l-4 7 10-9H8l4-5z" fill="#d0d0d0"/>',
    popup: '<path d="M1.500 1.500h13v10h-8l-3 3v-3h-2z" fill="#fff" stroke="#333"/><path d="M3.500 4h3v3h-3z" fill="#3b7fd0" stroke="none"/><path d="M8 4.500h5M8 6.500h5M4 9h6" stroke="#3b7fd0"/>',
    measure: '<path d="M.5 9.500h15v5H.5z" fill="#ead2a2" stroke="#8f6a2c"/><path d="M3 10v2M6 10v2M9 10v2M12 10v2" stroke="#8f6a2c"/><path d="M1 4.500h5M10 4.500h5M3 2L.500 4.500 3 7M13 2l2.500 2.500L13 7" stroke="#1a5c9c" stroke-width="1.500"/>',
    find: '<path d="M4 1h2l1 4h2l1-4h2l3 10v3h-5V8H6v6H1v-3z" fill="#2c2c2c" stroke="#000"/><path d="M3 10l2-6M11 10V5" stroke="#999"/>',
    route: '<path d="M2.500 13V7h4V3.500h6M11 1l3 2.500L11 6" stroke="#1d62a5"/><path d="M7 7.500h8v7H7l-2-3z" fill="#e8f1fa" stroke="#4a7fae"/><path d="M1 12h3v3H1zM1 6h3v3H1z" fill="#fff" stroke="#1d62a5"/>',
    gotoXY: '<circle cx="8" cy="3.500" r="3" stroke="#1d62a5"/><circle cx="8" cy="3.500" r="1" fill="#1d62a5" stroke="none"/><text x="2" y="15" font-size="9" style="fill:#1d4f95">XY</text>',
    time: '<path d="M.5 1.500h13v12H.5zM.5 3.500h13" fill="#eee"/><circle cx="10" cy="10" r="4.500" fill="#f4f4f4"/><path d="M10 7v3h3"/>',
    viewer: win + '<path d="M10 10l4 5" stroke="#8a4a2c" stroke-width="2.300"/><circle cx="7.500" cy="8" r="3.500" fill="#fff" stroke="#333"/><path d="M7.500 6v4M5.500 8h4" stroke="#000" stroke-width="1.300"/>',
    editArrow: '<path d="M5 3v10l3-3h4z" fill="currentColor"/>',
    editAnno: '<path d="M1 1v9l3-3h4z" fill="currentColor"/><text x="7" y="14" font-size="10">A</text>',
    segment: '<path d="M3 13L13 3" stroke-width="1.500"/><path d="M1 12h3v3H1zM12 1h3v3h-3z" fill="currentColor" stroke="none"/>',
    arc: '<path d="M3 13q0-8 10-10" stroke-width="1.500"/><path d="M1 12h3v3H1zM12 1h3v3h-3zM4 5h3v3H4z" fill="currentColor" stroke="none"/>',
    trace: '<path d="M2.500 13.500L5 3.500l8-2v10M4 13h8" stroke-width="1.300"/><path d="M1 12h3v3H1zM7 12h3v3H7zM12 9h3v3h-3z" fill="currentColor" stroke="none"/>',
    burst: '<path d="M8 0v5M8 11v5M0 8h5M11 8h5M2 2l3 3M11 11l3 3M14 2l-3 3M5 11l-3 3" stroke-dasharray="1.500 1"/><path d="M6.500 6.500h3v3h-3z" fill="currentColor"/>',
    vertices: '<path d="M2.500 2.500h11v11h-11zM3 3l10 10"/><path d="M1 1h3v3H1zM12 4h3v3h-3zM1 12h3v3H1zM12 12h3v3h-3z" fill="currentColor" stroke="none"/>',
    reshape: '<path d="M2.500 1v13h5V9L3 3" /><path d="M10.500 4v10M14.500 8v6M8 13.500h7" stroke-dasharray="1 1"/><path d="M1 12h3v3H1zM6 7h3v3H6z" fill="currentColor" stroke="none"/>',
    cutPoly: '<path d="M1.500 5.500h5v6h-5zM9.500 5.500h5v6h-5z" fill="#ddd"/><path d="M8 0v16" stroke-width="1.500"/>',
    splitLine: '<path d="M2 14L14 2M5 4l8 8" stroke-width="1.300"/><path d="M6 7h3v3H6z" fill="currentColor" stroke="none"/>',
    rotate: '<path d="M4 10q-3-6 3-7 6 0 6 5-1 4-5 5" stroke-width="2.500"/><path d="M9 10v5l-5-2z" fill="currentColor"/>',
    table: '<path d="M1.500 1.500h13v13h-13zM1.500 4.500h13M1.500 7.500h13M1.500 9.500h13M1.500 12.500h13M5.500 4v10M10.500 4v10" fill="#f0f0f0"/>',
    sketchProps: '<path d="M1.500 1.500h13v13h-13z" fill="#eee"/><path d="M3 12l4-7h2l4 7" stroke-width="1.300"/><path d="M2 11h3v3H2zM11 11h3v3h-3zM7 3h3v3H7z" fill="currentColor" stroke="none"/>',
    createFeat: '<path d="M.5 1.500h12v13H.5z" fill="#eee"/><path d="M2 4h3v2H2zM2 8h3v2H2zM2 12h3v1H2zM7 4.500h4M7 12l1-3 6-6 1 2-6 6z"/>',
    pageIn: page + '<circle cx="7" cy="7" r="4"/><path d="M7 5v4M5 7h4M10 10l4 4" stroke-width="1.500"/>',
    pageOut: page + '<circle cx="7" cy="7" r="4"/><path d="M5 7h4M10 10l4 4" stroke-width="1.500"/>',
    pagePan: page + '<path d="M5 14L1 9l2-1 2 2-2-6 2 4 1-6 1 6 1-6 1 6 2-5v7l-1 4z" fill="#fff"/>',
    pageFull: page + '<path d="M8 1v4M8 11v4M1 8h4M11 8h4" stroke-width="2"/><path d="M6 3l2-2 2 2zM6 13l2 2 2-2zM3 6L1 8l2 2zM13 6l2 2-2 2z" fill="currentColor"/>',
    pageOne: page + '<text x="2" y="12" font-size="8">1:1</text>',
    pageFixIn: page + '<path d="M3 3l4 4V4M7 7H4M13 3L9 7V4M9 7h3M3 13l4-4v3M7 9H4M13 13L9 9v3M9 9h3" stroke-width="1.500"/>',
    pageFixOut: page + '<path d="M7 7L4 4v3M4 4h3M9 7l3-3v3M12 4H9M7 9l-3 3V9M4 12h3M9 9l3 3V9M12 12H9" stroke-width="1.500"/>',
    pageBack: page + '<path d="M2 9l6-5v3h5v4H8v3z" fill="currentColor"/>',
    pageNext: page + '<path d="M14 9L8 4v3H1v4h7v3z" fill="currentColor"/>',
    draft: '<path d="M1.500 1.500h10l3 3v10h-13z" fill="#e8e8e8"/><path d="M4.500 5.500h7v6h-7zM6 8.500h4"/>',
    focusFrame: page + '<path d="M4.500 4.500h7v7h-7z" fill="#ddd" stroke-dasharray="2 1"/><path d="M4 12l8-8"/>',
    changeLayout: '<path d="M4 6q1-5 7-3" stroke="#124a80" stroke-width="2.500"/><path d="M10 0l4 4-5 2z" fill="#124a80" stroke="none"/><path d="M.5 7.500h5v7h-5zM9.500 7.500h6v7h-6z" fill="#fff" stroke="#333"/><path d="M2 9.500h2M2 12.500h2M11 9.500h3M11 12.500h3" stroke="#333"/>',
    dataDriven: '<path d="M3.500 1.500h5v7h-5zM5.500 3.500h5v7h-5zM7.500 4.500h7v8h-7z" fill="#fff" stroke="#333"/><path d="M10 7h3v3h-3z" fill="#e3c34c" stroke="#3c7bb5"/><path d="M.5 12.500h10v3H.5z" fill="#3b82d0" stroke="#1e4f8c"/>',
    send: '<path d="M2 2l13 6-13 6 3-6z" fill="#12b5f0" stroke="none"/><path d="M5 8h10L2 14z" fill="#1596dd" stroke="none"/>',
    infoTip: '<path d="M1 1h14v11h-5l-2 3-2-3H1z" fill="#4fb518" stroke="none"/><path d="M8 5.500v5M6.500 10h3M8 3v1.500" stroke="#fff" stroke-width="1.600"/>',
    colorWheel: '<path d="M8 2.500a5.500 5.500 0 0 1 5.500 5.500" stroke="#f7d13d" stroke-width="4"/><path d="M13.500 8a5.500 5.500 0 0 1-5.500 5.500" stroke="#b18cf0" stroke-width="4"/><path d="M8 13.500a5.500 5.500 0 0 1-5.500-5.500" stroke="#4ecbd8" stroke-width="4"/><path d="M2.500 8a5.500 5.500 0 0 1 5.500-5.500" stroke="#f58a55" stroke-width="4"/>',
    rainbow: '<path d="M2 15Q3 3 15 2.500" stroke="#f0382c" stroke-width="3"/><path d="M5 15q1-9 10-9.500" stroke="#ffb41f" stroke-width="3"/><path d="M8 15q0-6 7-6.500" stroke="#52c04a" stroke-width="3"/><path d="M11.500 15q0-3 3.500-3.500" stroke="#5b8def" stroke-width="3"/>',
    gear: '<rect width="16" height="16" rx="3" fill="#2c9ba0" stroke="none"/><path d="M0 6V3q0-3 3-3h10q3 0 3 3v2z" fill="#8b8890" stroke="none"/><circle cx="8" cy="8" r="4" stroke="#fff" stroke-width="1.800" stroke-dasharray="2 .5"/><circle cx="8" cy="8" r="1.500" stroke="#fff"/>',
    grid: '<path d="M1.500 1.500h13v13h-13zM8 1v14M1 8h14" stroke="#000" stroke-width="1.400"/>',
    pcNote: '<path d="M2 1h12v10H2z" fill="#2aa5f5" stroke="#456"/><path d="M4 3l6-1-4 7z" fill="#9bdcff" stroke="none"/><path d="M.5 11.500h15v4H.5z" fill="#ddd" stroke="#666"/><path d="M9 9h6v5H9z" fill="#ffe34a" stroke="#b79600"/><path d="M10 11.500h4" stroke="#555"/>',
    gridSkew: '<path d="M3.500 1.500l11 2-2 11-11-1zM9 2L7 14M2 7l12 2" stroke="#000"/>',
    pcAdd: '<path d="M2 1h12v10H2z" fill="#5f93c8" stroke="#345"/><path d="M4 3l5 3 3-4v6l-6 2z" fill="#c7e2f2" stroke="none"/><path d="M.5 11.500h12v4H.5z" fill="#aaa" stroke="#555"/><path d="M12 8v8M8 12h8" stroke="#16962a" stroke-width="3"/>',
    square: '<path d="M4.500 4.500h7v6h-7z" stroke="#000" stroke-width="1.400"/>',
    pc: pc,
    yellowArrow: '<path d="M2 2l5 1 1 2 7 6-3 .5 2 3.500-2 .5-2-4-2 3z" fill="#f2e600" stroke="#7a7200"/><circle cx="3.500" cy="3.500" r="2" stroke="#223c9c"/>',
    sheet: '<path d="M1.500 4.500h4l3-1h6v9h-13z" fill="#fff" stroke="#333"/>',
    pcSearch: '<path d="M3 1h11v8H3z" fill="#7cc6f4" stroke="#222"/><circle cx="8" cy="6" r="3.500" fill="#cfeaff" stroke="#000"/><path d="M10 9l5 5" stroke="#000" stroke-width="2"/><path d="M.5 12.500h12v3H.5z" fill="#e8c040" stroke="#555"/>',
    abCurve: '<path d="M1 7q6 1 7 6 2 2 7 1.500" stroke="#777" stroke-width="2"/><text x="3" y="6" font-size="8">a</text><text x="9" y="11" font-size="9" style="fill:#1d4f95">b</text>',
    forest: '<circle cx="8" cy="8" r="8" fill="#0f1fd8" stroke="none"/><path d="M1 8l2-2 2 1 3-3 3 3 2-1 2 2v3H1z" fill="#fff" stroke="none"/><path d="M1 11q7-4 14 0-3 5-7 5t-7-5z" fill="#18c018" stroke="none"/>',
    redStar: '<path d="M8 2v3M8 11v4M3 8h10M3 4l3 2M13 4l-3 2M4 13l3-3M12 13l-3-3" stroke="#e03a3a"/>',
    book: '<path d="M2 2.500h12v11H2z" fill="#eee" stroke="#000" stroke-width="2"/><path d="M4 5.500h8M4 8h8M4 10.500h8" stroke="#000"/>',
    stop: '<circle cx="8" cy="8" r="7.500" fill="#cc2f2b" stroke="#8b1a17"/><path d="M5 5l6 6M11 5l-6 6" stroke="#fff" stroke-width="2.500"/>',
    pentagon: '<path d="M1.500 13.500V6.500L8 1.500l6.500 6-1.500 6z" stroke="#0a63c8" stroke-width="1.300"/>',
    floppy: '<path d="M1 1h14v14H1z" fill="#6f6b00" stroke="#000" stroke-width="1.500"/><path d="M4 2h8v6H4z" fill="#fff" stroke="#000"/><path d="M4 10h8v5H4z" fill="#000" stroke="none"/><path d="M9 11h2v3H9z" fill="#fff" stroke="none"/>',
    brush: '<path d="M1 3h13v11H1z" fill="#ececec" stroke="none"/><path d="M14 1L8 7M4 8q5-3 6 1-2 5-5 4-2-1-1-5z" fill="currentColor" stroke-width="2"/>',
    chamfer: '<path d="M1.500 14.500V5l4-3.500h9v13z" stroke-width="1.400"/>',
    dome: '<path d="M1 7q3-6 7-5t7 5M1 14h14l-4-5H5zM6 6h4" stroke-width="1.400"/>',
    quill: '<path d="M2 5l3 7 3-3 5-8 1 3-5 8-4 3M5 4l3 4" stroke-width="1.500"/>',
    panes: '<path d="M1.500 4.500h13v7h-13zM8 4v8" fill="#e9e9e9"/>',
    dashes: '<path d="M1 3h4l3 2h7M1 8h6M10 8l4-1M1 14h4l3-2 6 2" stroke="#000" stroke-width="1.200" stroke-dasharray="3 1.500"/>',
    pagesSetup: '<path d="M.5 2.500h9v9h-9zM2.500 4.500h9v9h-9zM5.500 6.500h7v8h-7z" fill="#fff" stroke="#333"/><path d="M7 8h4v4H7z" fill="#5f9f4c" stroke="none"/><path d="M8 3q5-3 7 0v4q-4 2-7-2z" fill="#d9a443" stroke="#7d5618"/>',
    pagesRefresh: '<path d="M6.500 5.500h8v9h-8z" fill="#eee"/><path d="M2 8q2-6 8-5M8 1l3 2-3 3M10 10q-4 4-8 0" stroke-width="1.800"/>',
    first: '<path d="M4 2v12" stroke-width="2"/><path d="M13 2v12L6 8z" fill="currentColor" stroke="none"/>',
    prev: '<path d="M12 2v12L5 8z" fill="currentColor" stroke="none"/>',
    next: '<path d="M5 2v12l7-6z" fill="currentColor" stroke="none"/>',
    last: '<path d="M13 2v12" stroke-width="2"/><path d="M3 2v12l7-6z" fill="currentColor" stroke="none"/>',
    rotateGraphic: '<path d="M4 14a7 7 0 1 1 8 0" stroke-dasharray="4 1"/><path d="M13 10l2 4h-4zM6.500 6.500h3v3h-3z"/>',
    zoomSelected: '<path d="M2 1h12v5H2zM10 8h4v6h-4z" fill="#d8d8d8"/><circle cx="6" cy="7" r="4" fill="#eee"/><path d="M6 5v4M4 7h4M3 11l-2 4" stroke-width="1.500"/>',
    rectShape: '<path d="M1.500 2.500h13v11h-13z" fill="#f6f6f6" stroke="#222"/>',
    editVertices: '<path d="M2.500 12.500l2-9h9l-4 5 4 4z"/><path d="M3 2h3v3H3zM12 2h3v3h-3zM1 11h3v3H1zM12 11h3v3h-3z" fill="currentColor" stroke="none"/>',
    openType: '<path d="M2.500 .5h8l3 3v12h-11z" fill="#e1eefb" stroke="#6f9fd0"/><ellipse cx="8" cy="8.500" rx="3" ry="4" transform="rotate(20 8 8.500)" stroke="#18752c" stroke-width="2"/>',
    fillColor: '<path d="M3 6l5-4 4 4-5 4zM8 2V0M11 5q4 0 3 5" fill="#bbb" stroke="#444"/><path d="M0 14.500h16" stroke="#fdfdb8" stroke-width="2.500"/>',
    lineColor: '<path d="M1 10h4l1-4 6-5 2 2-4 6-4 1" fill="#999" stroke="#222"/><path d="M0 14.500h16" stroke="#000" stroke-width="2.500"/>',
    markerColor: '<circle cx="8" cy="6" r="2.300" fill="#0b12d8" stroke="none"/><path d="M0 14.500h16" stroke="#55ff00" stroke-width="2.500"/>',
    topoSelect: '<path d="M1 6l7-4 7 4-7 4zM1 6v4l6 4" fill="#ddd"/><path d="M6.500 8.500h8v7h-8zM7 9l4 3 3-3" fill="#f4f4f4"/>',
    topoEdit: nodes + '<path d="M8 5v9l3-2h5z" fill="currentColor"/>',
    topoModify: nodes + '<path d="M6 15l9-11" stroke-width="1.500"/>',
    topoReshape: '<path d="M2 3h10M2 3l5 5 5-5M3 3v10l7-4M12 14l3-9" stroke-width="1.300"/><path d="M1 1h3v3H1zM11 1h3v3h-3zM1 12h3v3H1zM6 7h3v3H6z" fill="#ddd"/>',
    generalize: '<path d="M2.500 1v12.500H15M5 1v4h4v5h6" stroke-dasharray="3 1"/>',
    planarize: nodes,
    validate: '<path d="M2.500 1.500h11v8h-11zM3 2l5 5 5-5M3 9l5-3 5 3" fill="#eee"/><path d="M3 11l4 4 8-9" stroke-width="2.200"/>',
    validateAll: '<path d="M.5 1.500h10v7H.500zM1 2l4 4 5-4" fill="#eee"/><path d="M7 11l3 4 5-7" stroke-width="2.200"/>',
    fixError: '<path d="M1 3v11l3-3 2 4 2-1-2-4h3z" fill="#eee"/><circle cx="11" cy="5" r="4" fill="#b5b5b5"/><path d="M9.500 3.500l3 3M12.500 3.500l-3 3" stroke="#fff"/>',
    errorWin: '<path d="M.5 1.500h14v12H.5zM.5 4.500h14M2 7.500h6M2 10.500h4" fill="#eee"/><circle cx="11" cy="11" r="4" fill="#b5b5b5"/><path d="M9.500 9.500l3 3M12.500 9.500l-3 3" stroke="#fff"/>',
    pin: '<path d="M5.500 8.500v-6h5v6M9.500 3v5M4 8.500h8M8 9v4" stroke="#000" stroke-width="1.200"/>',
    close: '<path d="M4 4.500l7 7M11 4.500l-7 7" stroke="#000" stroke-width="1.800"/>',
    byOrder: '<path d="M3 4v9h5M3 7h5" stroke="#777"/><circle cx="3" cy="3" r="2.500" fill="#f3cf82" stroke="#b98b35"/><path d="M8 4l3 2-3 2-3-2zM9 11l3 2-3 2-3-2z" fill="#f3cf82" stroke="#b98b35"/><path d="M13 7.500h3M13 13.500h3" stroke="#24527e" stroke-width="1.500"/>',
    bySource: diamond + '<path d="M3 2.500v7q5 3 10 0v-7" fill="#7d93b4" stroke="#44556e"/><ellipse cx="8" cy="2.500" rx="5" ry="2" fill="#dbe5f2" stroke="#44556e"/>',
    byVisible: '<path d="M8 6l7.500 5L8 15.500.5 11z" fill="#ddd" stroke="#888"/><path d="M8 .5L15.500 6 8 10.500.5 6z" fill="#f3c46c" stroke="#b98b35"/>',
    bySelection: diamond + '<path d="M3.500 .5h9v9h-9z" fill="#15c3dc" stroke="#222"/><path d="M7 9l1-4 4-2v6z" fill="#fff" stroke="#444"/>',
    options: '<path d="M2.500 1.500h12v13h-12z" fill="#f7f9fc" stroke="#4a5a70"/><path d="M7 4.500h6M7 8.500h6M7 12h6" stroke="#24527e"/><path d="M4 4h1v1H4zM4 8h1v1H4zM4 11.500h1v1H4z" stroke="#000"/>',
    layers: '<path d="M4 9h11l-3 5H1z" fill="#f3cf82" stroke="#a8792a"/><path d="M4 6h11l-3 5H1z" fill="#f3cf82" stroke="#a8792a"/><path d="M4 3h11l-3 5H1z" fill="#fbe3ac" stroke="#a8792a"/>',
    dataView: '<path d="M4.500 4.500h7v7h-7z" fill="#ffe98c" stroke="#333"/><path d="M5 11l5-6v6z" fill="#7fb04c" stroke="none"/>',
    layoutView: '<path d="M4.500 4.500h5l2 2v5h-7z" fill="#fff" stroke="#333"/><path d="M6 8h4M6 10h3" stroke="#2b64b8"/>',
    refresh: '<path d="M4 7q2-4 7-2M12 9q-2 4-7 2" stroke="#1b4f8c" stroke-width="1.500"/><path d="M12 3v4H8zM4 13V9h4z" fill="#1b4f8c" stroke="none"/>',
    pause: '<path d="M6 5v6M10 5v6" stroke="#1b4f8c" stroke-width="2"/>',
    rootBox: '<path d="M.5 13.500v-11h5l1 1h8v10z" fill="#f3e08a" stroke="#a8913c"/><path d="M3 9l6-4 6 3v5l-5 3-7-3z" fill="#c53a30" stroke="#7e1512"/><path d="M3 9l7 2 5-3" stroke="#f0a49c"/><path d="M7 7l2-2 3 1" stroke="#222"/>',
    toolbox: '<path d="M.5 5.500l8-4 7 3v7l-6 4-8-4z" fill="#c0362c" stroke="#7e1a14"/><path d="M.5 5.500l8-4 7 3-6 4z" fill="#e26a5c" stroke="#8c211a"/><path d="M9.500 8.500v7M1 9l8 3 6-4" stroke="#7e1a14"/><path d="M6 4q0-3 4-2v2" stroke="#222" stroke-width="1.300"/><path d="M4 8.500v2" stroke="#ddd" stroke-width="1.500"/>',
    toolset: '<path d="M.5 9.500l4-2 8 4.500v3l-3 .5-9-4z" fill="#c0362c" stroke="#7e1a14"/><path d="M1 2l3-1 11 7v4l-3 1L1 6z" fill="#3a3a3a" stroke="#1c1c1c"/><path d="M3 5l9 6M6 1l8 9" stroke="#d4d0b8" stroke-width="2"/>',
    tool: '<path d="M6 4l9 10" stroke="#8d8368" stroke-width="3"/><path d="M6.500 4.500l8 9" stroke="#e6dcc0" stroke-width="1.500"/><path d="M0 6q2-5 7-5l3 1-3 4-2-2q-3 0-5 2z" fill="#555" stroke="#333"/>',
    usb: '<path d="M5 1h6v4H5z" fill="#aeb4c2" stroke="none"/><path d="M6.500 3h1M9 3h1" stroke="#666"/><path d="M3.500 4.500h9v6q0 4-4.500 4.500Q3.500 14.500 3.500 10.500z" fill="#4a78f5" stroke="none"/>'
};

function drawIcons(root) {
    root.querySelectorAll('[data-icon]').forEach(function (el) {
        var name = el.dataset.icon;
        el.innerHTML = '<svg class="ico" viewBox="0 0 16 16">' + icons[name] + '</svg>';
        if (el.tagName === 'BUTTON') {
            el.setAttribute('aria-label', name);
        }
    });
}

// [level, icon, label, state]
var tools = [
    [0, 'rootBox', 'ArcToolbox'],
    [1, 'toolbox', '3D Analyst 工具'],
    [1, 'toolbox', 'Data Interoperability 工具'],
    [1, 'toolbox', 'Geostatistical Analyst 工具'],
    [1, 'toolbox', 'Network Analyst 工具'],
    [1, 'toolbox', 'Schematics 工具'],
    [1, 'toolbox', 'Spatial Analyst 工具'],
    [1, 'toolbox', 'Tracking Analyst 工具'],
    [1, 'toolbox', '编辑工具'],
    [1, 'toolbox', '地理编码工具'],
    [1, 'toolbox', '多维工具'],
    [1, 'toolbox', '分析工具'],
    [1, 'toolbox', '服务器工具'],
    [1, 'toolbox', '空间统计工具'],
    [1, 'toolbox', '数据管理工具'],
    [1, 'toolbox', '线性参考工具'],
    [1, 'toolbox', '制图工具'],
    [1, 'toolbox', '转换工具', 'open'],
    [2, 'toolset', 'Excel'],
    [2, 'toolset', 'JSON', 'open'],
    [3, 'tool', 'JSON 转要素'],
    [3, 'tool', '要素转 JSON', 'hot'],
    [2, 'toolset', '元数据'],
    [2, 'toolset', '由 GPS 转出'],
    [2, 'toolset', '由 KML 转出'],
    [2, 'toolset', '由 WFS 转出'],
    [2, 'toolset', '由栅格转出'],
    [2, 'toolset', '转为 CAD'],
    [2, 'toolset', '转为 Collada'],
    [2, 'toolset', '转为 Coverage'],
    [2, 'toolset', '转为 dBASE'],
    [2, 'toolset', '转为 KML'],
    [2, 'toolset', '转为 Shapefile'],
    [2, 'toolset', '转为栅格'],
    [2, 'toolset', '转出至地理数据库'],
    [1, 'toolbox', '宗地结构工具']
];

document.getElementById('toolTree').innerHTML = tools.map(function (t) {
    var level = t[0];
    var state = t[3] || '';
    var expander = '';
    if (level === 1 || level === 2) {
        expander = '<button class="expander ' + state + '" aria-label="expand"></button>';
    }
    return '<li class="' + (level ? 'level-' + level : 'root') + ' ' + state + '">' + expander +
        '<span data-icon="' + t[1] + '"></span><span class="label">' + t[2] + '</span></li>';
}).join('');

drawIcons(document);
```
